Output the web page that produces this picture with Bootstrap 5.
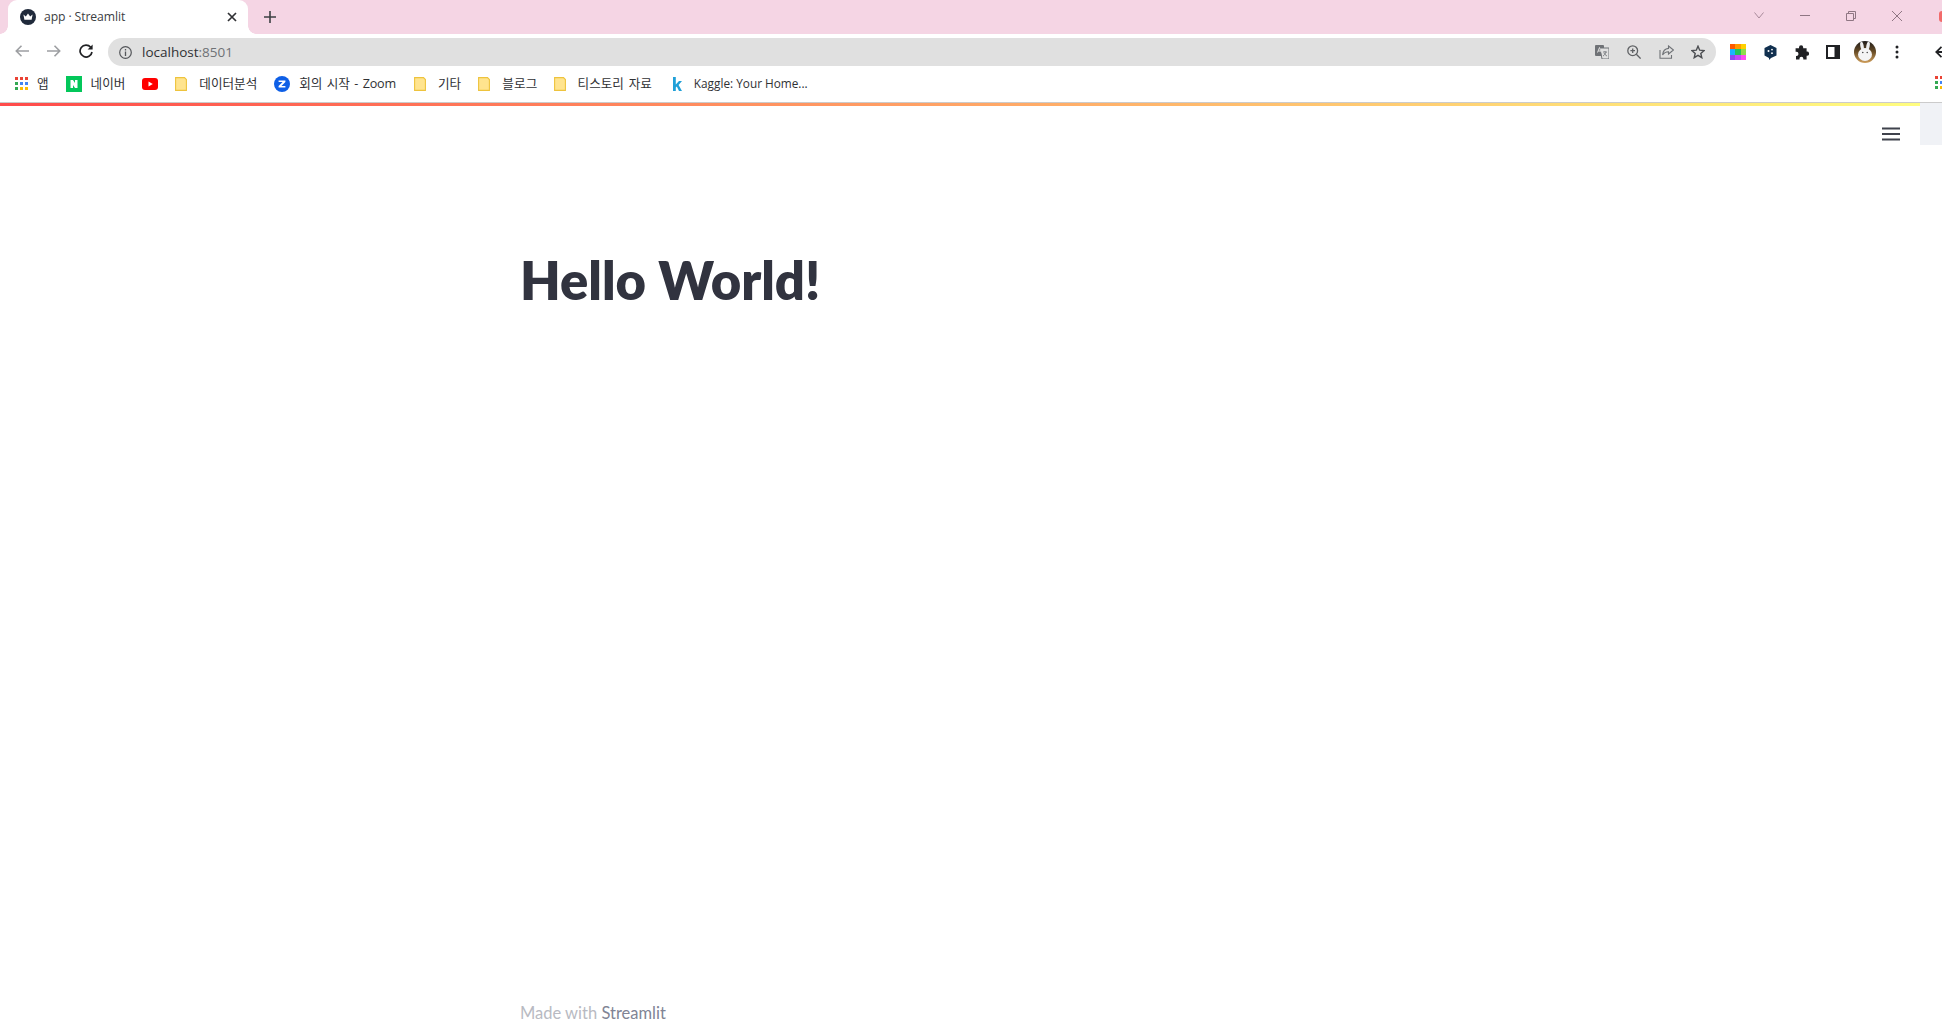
<!DOCTYPE html>
<html lang="ko">
<head>
<meta charset="utf-8">
<title>app · Streamlit</title>
<link href="https://cdn.jsdelivr.net/npm/bootstrap@5.3.0/dist/css/bootstrap.min.css" rel="stylesheet">
<style>
html,body{height:100%;overflow:hidden;background:#fff}
body{font-family:"Open Sans","Noto Sans CJK KR",sans-serif;color:#202124}
svg{display:block;flex:none}
.tabstrip{height:34px;background:#f5d5e4;padding-left:8px}
.chrome-tab{width:240px;height:34px;background:#fff;border-radius:9px 9px 0 0;padding:0 11px 0 12px;position:relative;font-size:12.2px;color:#3c4043}
.chrome-tab::before,.chrome-tab::after{content:"";position:absolute;bottom:0;width:8px;height:8px}
.chrome-tab::before{left:-8px;background:radial-gradient(circle at 0 0,#f5d5e4 7.5px,#fff 8px)}
.chrome-tab::after{right:-8px;background:radial-gradient(circle at 100% 0,#f5d5e4 7.5px,#fff 8px)}
.tab-label{margin-left:8px;letter-spacing:-.1px}
.tab-x{margin-left:auto}
.tab-plus{margin-left:16px}
.winctl{margin-left:auto;gap:36px;padding-right:40px;margin-top:-3px}
.tabdot{width:3px;height:11px;background:#f26b6b;border-radius:6px 0 0 6px;position:absolute;right:0;top:11px}
.toolbar{height:34px;padding-left:15px;position:relative;background:#fff}
.navgap{gap:18px;height:36px;margin-top:-1px}
.omnibox{width:1608px;height:28px;margin:4px 0 0 15px;background:#e0e0e0;border-radius:14px;padding:0 11px;font-size:13.5px}
.omni-host{margin-left:10px;color:#303134}
.omni-port{color:#6f7276}
.omni-tools{margin-left:auto;gap:18px}
.star-tool{margin-left:-1px}
.ext-tools{margin:4px 0 0 14px;height:28px}
.ext-hex{margin-left:18px}
.ext-puzzle{margin-left:17px}
.ext-panel{margin-left:17px}
.ext-avatar{margin-left:14px}
.ext-kebab{margin-left:19px}
.edge-arrow{position:absolute;left:1935px;top:12px}
.bookmarks{height:34px;padding-left:15px;font-size:12.6px;background:#fff;color:#303134;gap:17px;position:relative;margin-top:-1px}
.bm-item{gap:9px;white-space:nowrap;word-spacing:1.5px}
.bm-folder{gap:12px}
.bm-gap1{margin-left:1px}
.bm-gapn{margin-left:-1px}
.bm-blog{letter-spacing:.2px}
.bm-zoom{letter-spacing:-.17px}
.bm-kaggle{font-size:11.8px;margin-left:4px;word-spacing:0}
.bm-edge{position:absolute;left:1935px;top:9px}
.hair{height:1px;background:#cbcbcb;margin-top:1px}
.rainbow{height:3px;width:1920px;background:linear-gradient(90deg,#ff4b4b,#fffd80)}
.appview{position:relative;flex:1 1 auto;min-height:0}
.sidestrip{position:absolute;right:0;top:-3px;width:22px;height:42px;background:#f0f2f6}
.hamburger{position:absolute;left:1880.5px;top:21px}
.app-main{width:880px;margin:0 auto 0 520px;height:100%}
.hello{font-family:Lato,"Noto Sans",sans-serif;font-weight:800;font-size:52.5px;line-height:1.2;color:#31333f;margin:0;padding-top:142px;letter-spacing:0}
.madewith{font-family:Lato,"Noto Sans",sans-serif;font-size:16.5px;color:#b8bac2;padding-bottom:11px;line-height:24px}
.madewith span{color:#808495}
</style>
</head>
<body class="d-flex flex-column">
<div class="tabstrip d-flex align-items-center position-relative flex-shrink-0">
  <div class="chrome-tab d-flex align-items-center">
    <svg width="16" height="16" viewBox="0 0 16 16"><circle cx="8" cy="8" r="8" fill="#202a3b"/><path d="M3.4 5.4 5.8 7.4 8 4.4 10.2 7.4 12.6 5.4 11.6 10.8H4.4Z" fill="#fff"/></svg>
    <span class="tab-label">app · Streamlit</span>
    <svg class="tab-x" width="10" height="10" viewBox="0 0 10 10"><path d="M1 1 9 9M9 1 1 9" stroke="#303134" stroke-width="1.7"/></svg>
  </div>
  <svg class="tab-plus" width="12" height="12" viewBox="0 0 12 12"><path d="M6 0V12M0 6H12" stroke="#3c4043" stroke-width="1.6"/></svg>
  <div class="winctl d-flex align-items-center">
    <svg width="10" height="7" viewBox="0 0 10 7"><path d="M.5.5 5 6 9.5.5" fill="none" stroke="#a98a9a"/></svg>
    <svg width="10" height="1" viewBox="0 0 10 1"><path d="M0 .5H10" stroke="#8f7683"/></svg>
    <svg width="10" height="10" viewBox="0 0 10 10"><path d="M.5 2.5H7.5V9.5H.5ZM2.5 2.5V.5H9.5V7.5H7.5" fill="none" stroke="#8f7683"/></svg>
    <svg width="10" height="10" viewBox="0 0 10 10"><path d="M0 0 10 10M10 0 0 10" stroke="#8f7683"/></svg>
  </div>
  <div class="tabdot"></div>
</div>

<div class="toolbar d-flex align-items-start flex-shrink-0">
  <div class="navgap d-flex align-items-center">
    <svg width="14" height="12" viewBox="0 0 14 12"><path d="M14 6H1.5M6.5 .8 1.3 6l5.2 5.2" fill="none" stroke="#9d9fa2" stroke-width="1.6"/></svg>
    <svg width="14" height="12" viewBox="0 0 14 12"><path d="M0 6H12.5M7.5 .8 12.7 6 7.5 11.2" fill="none" stroke="#9d9fa2" stroke-width="1.6"/></svg>
    <svg width="14" height="14" viewBox="0 0 14 14"><path d="M11.7 3.2A6 6 0 1 0 13 8" fill="none" stroke="#202124" stroke-width="1.7"/><path d="M13.6 .6V5.6H8.6Z" fill="#202124"/></svg>
  </div>
  <div class="omnibox d-flex align-items-center">
    <svg width="13" height="13" viewBox="0 0 13 13"><circle cx="6.5" cy="6.5" r="5.8" fill="none" stroke="#54565a" stroke-width="1.2"/><path d="M6.5 5.6V10M6.5 3V4.4" stroke="#54565a" stroke-width="1.3"/></svg>
    <span class="omni-host">localhost<span class="omni-port">:8501</span></span>
    <div class="omni-tools d-flex align-items-center">
      <svg width="14" height="14" viewBox="0 0 14 14"><rect x="0" y="0" width="9" height="11" rx="1" fill="#6f7276"/><path d="M5 3H14V14H7Z" fill="#e0e0e0" stroke="#6f7276"/><path d="M2.5 7.5 4.5 2.5 6.5 7.5M3.2 6H5.8" fill="none" stroke="#e0e0e0"/><path d="M8 7H12M10 6V7M11 7C10.5 9 9.5 10 8 11M9 8C9.7 9.5 10.7 10.5 12 11" fill="none" stroke="#6f7276" stroke-width=".8"/></svg>
      <svg width="14" height="14" viewBox="0 0 14 14"><circle cx="5.7" cy="5.7" r="4.9" fill="none" stroke="#5f6164" stroke-width="1.3"/><path d="M9.3 9.3 13.6 13.6M3.4 5.7H8M5.7 3.4V8" stroke="#5f6164" stroke-width="1.3"/></svg>
      <svg width="15" height="14" viewBox="0 0 15 14"><path d="M1 5V13.3H12.5V10" fill="none" stroke="#6f7276" stroke-width="1.1"/><path d="M9.5 1 14.5 5 9.5 9V6.7C6.5 6.7 5 7.6 3.6 10 3.9 6.5 6 3.8 9.5 3.4Z" fill="none" stroke="#6f7276" stroke-width="1.1"/></svg>
      <svg class="star-tool" width="14" height="14" viewBox="0 0 14 14"><path d="M7 1.2 8.7 5.2 13 5.6 9.8 8.4 10.8 12.7 7 10.4 3.2 12.7 4.2 8.4 1 5.6 5.3 5.2Z" fill="none" stroke="#4c4e52" stroke-width="1.4"/></svg>
    </div>
  </div>
  <div class="ext-tools d-flex align-items-center">
    <svg width="16" height="16" viewBox="0 0 16 16" shape-rendering="crispEdges"><rect width="6" height="5" fill="#ff5a00"/><rect x="5" width="6" height="5" fill="#ff9a00"/><rect x="11" width="5" height="5" fill="#ffd000"/><rect y="5" width="6" height="6" fill="#18b4ff"/><rect x="5" y="5" width="6" height="6" fill="#22c45a"/><rect x="11" y="5" width="5" height="6" fill="#8fdc4c"/><rect y="11" width="6" height="5" fill="#8b4cf0"/><rect x="5" y="11" width="6" height="5" fill="#c04cf5"/><rect x="11" y="11" width="5" height="5" fill="#ff4cf0"/></svg>
    <svg class="ext-hex" width="13" height="15" viewBox="0 0 13 15"><path d="M6.5 0 12.5 3V10.5L7 13 5 15V13L.5 10.5V3Z" fill="#11304f"/><circle cx="4.5" cy="6" r="1" fill="#fff"/><circle cx="8" cy="4.6" r=".9" fill="#fff"/><circle cx="8" cy="8.2" r=".9" fill="#fff"/></svg>
    <svg class="ext-puzzle" width="15" height="15" viewBox="0 0 15 15"><path d="M5 3.2V2.4a2.1 2.1 0 0 1 4.2 0V3.2H12.6V6.6H13a2.1 2.1 0 0 1 0 4.2H12.6V14.4H9.3V13.6a1.9 1.9 0 0 0-3.8 0V14.4H2V11H2.4a2.1 2.1 0 0 0 0-4.2H1.6V3.2Z" fill="#202124"/></svg>
    <svg class="ext-panel" width="14" height="14" viewBox="0 0 14 14"><rect width="14" height="14" fill="#202124"/><rect x="2" y="2" width="6.5" height="10" fill="#fff"/></svg>
    <svg class="ext-avatar" width="22" height="22" viewBox="0 0 22 22"><defs><linearGradient id="av" x1="0" y1="0" x2="0" y2="1"><stop offset="0" stop-color="#1d1a18"/><stop offset=".5" stop-color="#6b4f28"/><stop offset="1" stop-color="#d09f5c"/></linearGradient></defs><circle cx="11" cy="11" r="11" fill="url(#av)"/><ellipse cx="8" cy="5" rx="1.7" ry="4.4" fill="#eee" transform="rotate(-10 8 5)"/><ellipse cx="14" cy="5" rx="1.7" ry="4.4" fill="#eee" transform="rotate(10 14 5)"/><ellipse cx="11" cy="13.5" rx="7" ry="6.5" fill="#f4f4f4"/><circle cx="8.8" cy="11.5" r=".7" fill="#333"/><circle cx="13.2" cy="11.5" r=".7" fill="#333"/></svg>
    <svg class="ext-kebab" width="4" height="14" viewBox="0 0 4 14"><circle cx="2" cy="2" r="1.5" fill="#202124"/><circle cx="2" cy="7" r="1.5" fill="#202124"/><circle cx="2" cy="12" r="1.5" fill="#202124"/></svg>
  </div>
  <svg class="edge-arrow" width="14" height="12" viewBox="0 0 14 12"><path d="M14 6H2M6.5 .8 1.3 6l5.2 5.2" fill="none" stroke="#202124" stroke-width="1.8"/></svg>
</div>

<div class="bookmarks d-flex align-items-center flex-shrink-0">
  <div class="bm-item d-flex align-items-center"><svg width="13" height="13" viewBox="0 0 13 13" shape-rendering="crispEdges"><rect width="3" height="3" fill="#ea4335"/><rect x="5" width="3" height="3" fill="#ea4335"/><rect x="10" width="3" height="3" fill="#ea4335"/><rect y="5" width="3" height="3" fill="#34a853"/><rect x="5" y="5" width="3" height="3" fill="#4285f4"/><rect x="10" y="5" width="3" height="3" fill="#4285f4"/><rect y="10" width="3" height="3" fill="#34a853"/><rect x="5" y="10" width="3" height="3" fill="#fbbc04"/><rect x="10" y="10" width="3" height="3" fill="#fbbc04"/></svg><span>앱</span></div>
  <div class="bm-item d-flex align-items-center"><svg width="16" height="16" viewBox="0 0 16 16"><rect width="16" height="16" fill="#03c75a"/><path d="M4.5 4H7L9 7V4H11.5V12H9L7 9V12H4.5Z" fill="#fff"/></svg><span>네이버</span></div>
  <div class="bm-item d-flex align-items-center"><svg width="16" height="12" viewBox="0 0 16 12"><rect width="16" height="12" rx="3" fill="#f00"/><path d="M6.5 3.4 10.8 6 6.5 8.6Z" fill="#fff"/></svg></div>
  <div class="bm-item bm-folder d-flex align-items-center"><svg width="12" height="14" viewBox="0 0 12 14"><path d="M.6.6H9.5L11.4 2.5V13.4H.6Z" fill="#ffe48f" stroke="#eec33d" stroke-width="1.1"/></svg><span>데이터분석</span></div>
  <div class="bm-item d-flex align-items-center"><svg width="16" height="16" viewBox="0 0 16 16"><circle cx="8" cy="8" r="8" fill="#0e5fe6"/><path d="M4.6 4.4H11.4V6L7.4 10H11.4V11.6H4.6V10L8.6 6H4.6Z" fill="#fff"/></svg><span class="bm-zoom">회의 시작 - Zoom</span></div>
  <div class="bm-item bm-folder bm-gap1 d-flex align-items-center"><svg width="12" height="14" viewBox="0 0 12 14"><path d="M.6.6H9.5L11.4 2.5V13.4H.6Z" fill="#ffe48f" stroke="#eec33d" stroke-width="1.1"/></svg><span>기타</span></div>
  <div class="bm-item bm-folder d-flex align-items-center"><svg width="12" height="14" viewBox="0 0 12 14"><path d="M.6.6H9.5L11.4 2.5V13.4H.6Z" fill="#ffe48f" stroke="#eec33d" stroke-width="1.1"/></svg><span class="bm-blog">블로그</span></div>
  <div class="bm-item bm-folder bm-gapn d-flex align-items-center"><svg width="12" height="14" viewBox="0 0 12 14"><path d="M.6.6H9.5L11.4 2.5V13.4H.6Z" fill="#ffe48f" stroke="#eec33d" stroke-width="1.1"/></svg><span>티스토리 자료</span></div>
  <div class="bm-item bm-folder bm-kaggle d-flex align-items-center"><svg width="9" height="14" viewBox="0 0 9 14"><path d="M0 0H2.8V7.6L6 4H9L5.6 8 9 14H6L3.8 9.6 2.8 10.6V14H0Z" fill="#20a0d8"/></svg><span>Kaggle: Your Home...</span></div>
  <svg class="bm-edge" width="13" height="13" viewBox="0 0 13 13" shape-rendering="crispEdges"><rect width="3" height="3" fill="#ea4335"/><rect x="5" width="3" height="3" fill="#ea4335"/><rect y="5" width="3" height="3" fill="#34a853"/><rect x="5" y="5" width="3" height="3" fill="#4285f4"/><rect y="10" width="3" height="3" fill="#34a853"/><rect x="5" y="10" width="3" height="3" fill="#fbbc04"/></svg>
</div>
<div class="hair flex-shrink-0"></div>
<div class="rainbow flex-shrink-0"></div>

<div class="appview">
  <div class="sidestrip"></div>
  <svg class="hamburger" width="20" height="14" viewBox="0 0 20 14"><path d="M1 1.5H19M1 7H19M1 12.5H19" stroke="#3f424c" stroke-width="1.8"/></svg>
  <main class="app-main d-flex flex-column">
    <h1 class="hello">Hello World!</h1>
    <div class="madewith mt-auto">Made with <span>Streamlit</span></div>
  </main>
</div>
</body>
</html>
